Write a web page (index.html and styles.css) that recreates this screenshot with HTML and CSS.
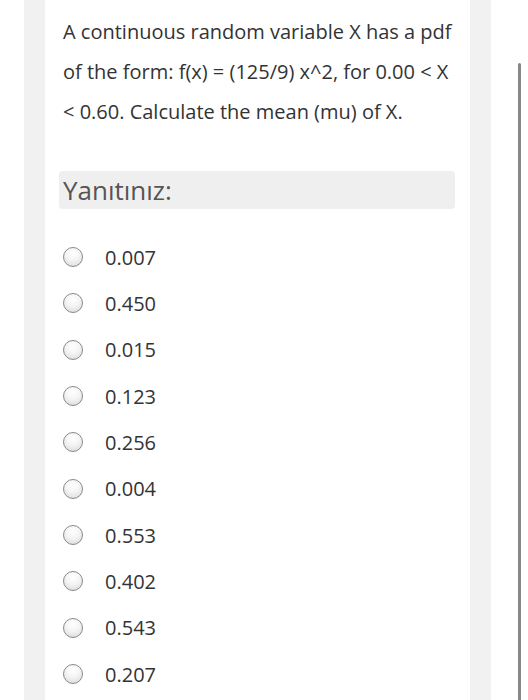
FILE: index.html
```html
<!DOCTYPE html>
<html>
<head>
<meta charset="utf-8">
<link rel="stylesheet" href="styles.css">
</head>
<body>
<div class="page">
  <div class="gutter"></div>
  <div class="strip"></div>
  <main class="content">
    <p class="question">A continuous random variable X has a pdf of the form: f(x) = (125/9) x^2, for 0.00 &lt; X &lt; 0.60. Calculate the mean (mu) of X.</p>
    <div class="answer-label">Yanıtınız:</div>
    <ul class="options">
      <li class="option"><span class="radio"></span><span class="val">0.007</span></li>
      <li class="option"><span class="radio"></span><span class="val">0.450</span></li>
      <li class="option"><span class="radio"></span><span class="val">0.015</span></li>
      <li class="option"><span class="radio"></span><span class="val">0.123</span></li>
      <li class="option"><span class="radio"></span><span class="val">0.256</span></li>
      <li class="option"><span class="radio"></span><span class="val">0.004</span></li>
      <li class="option"><span class="radio"></span><span class="val">0.553</span></li>
      <li class="option"><span class="radio"></span><span class="val">0.402</span></li>
      <li class="option"><span class="radio"></span><span class="val">0.543</span></li>
      <li class="option"><span class="radio"></span><span class="val">0.207</span></li>
    </ul>
  </main>
  <div class="strip"></div>
  <div class="side"><div class="scrollbar"></div></div>
</div>
</body>
</html>
```

FILE: styles.css
```css
html, body {
  margin: 0;
  padding: 0;
  background: #ffffff;
  height: 100%;
  overflow: hidden;
}
body {
  font-family: "Open Sans", "Noto Sans", sans-serif;
  color: #333333;
}
.page {
  display: flex;
  height: 700px;
}
.gutter {
  width: 24px;
  flex: none;
}
.strip {
  width: 21px;
  flex: none;
  background: #f1f1f1;
}
.content {
  width: 425px;
  flex: none;
  padding: 12px 15px 0 14px;
  box-sizing: border-box;
}
.question {
  margin: 0 -6px 0 4px;
  font-size: 20px;
  line-height: 40px;
  color: #333;
}
.answer-label {
  margin-top: 39px;
  background: #efefef;
  border-radius: 4px;
  height: 38px;
  padding-left: 4px;
  font-size: 26px;
  line-height: 38px;
  color: #555;
}
.options {
  list-style: none;
  margin: 25px 0 0 0;
  padding: 0;
}
.option {
  display: flex;
  align-items: center;
  height: 46.33px;
  padding-left: 4px;
}
.radio {
  width: 20px;
  height: 20px;
  border-radius: 50%;
  border: 1px solid #8a8a8a;
  background: radial-gradient(circle at 50% 30%, #ffffff 0%, #f4f4f4 45%, #d6d6d6 100%);
  box-sizing: border-box;
  flex: none;
}
.val {
  margin-left: 22px;
  font-size: 20px;
  color: #333;
}
.side {
  flex: 1;
  display: flex;
  justify-content: flex-end;
  padding-right: 7px;
}
.scrollbar {
  margin-top: 63px;
  width: 3px;
  height: 637px;
  background: #888;
  border-radius: 2px 2px 0 0;
}
```
